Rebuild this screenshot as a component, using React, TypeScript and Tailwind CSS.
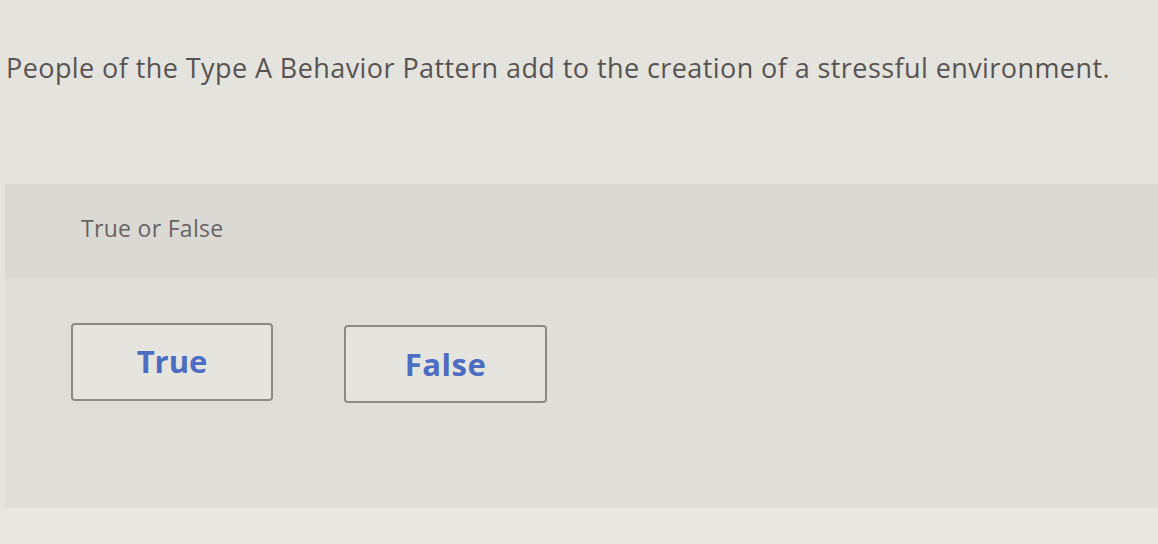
export default function App() {
  return (
    <div
      className="w-[1158px] h-[544px] overflow-hidden bg-[#e5e3de] flex flex-col"
      style={{ fontFamily: "'Open Sans', Lato, sans-serif" }}
    >
      <h1 className="pt-[50px] pl-[6px] h-[184px] text-[27px] leading-[36px] text-[#585353] font-normal tracking-[0.42px] whitespace-nowrap">
        People of the Type A Behavior Pattern add to the creation of a stressful environment.
      </h1>
      <div className="ml-[5px] flex flex-col">
        <div className="h-[94px] bg-[#dbd9d4] pl-[76px] pt-[29px]">
          <p className="text-[23px] leading-[30px] text-[#686464] tracking-[0.3px]">True or False</p>
        </div>
        <div className="h-[230px] bg-[#e0ded9] flex items-start gap-[71px] pl-[66px] pt-[45px]">
          <button className="w-[202px] h-[78px] border-2 border-[#8c8a88] rounded-[4px] bg-[#e6e4df] text-[31px] font-bold text-[#4c6dc2] flex items-center justify-center pb-[2px]">
            True
          </button>
          <button className="w-[203px] h-[78px] mt-[2px] border-2 border-[#8c8a88] rounded-[4px] bg-[#e6e4df] text-[31px] font-bold text-[#4c6dc2] tracking-[0.5px] flex items-center justify-center">
            False
          </button>
        </div>
      </div>
      <div className="flex-1 bg-[#e9e7e2]" />
    </div>
  );
}
